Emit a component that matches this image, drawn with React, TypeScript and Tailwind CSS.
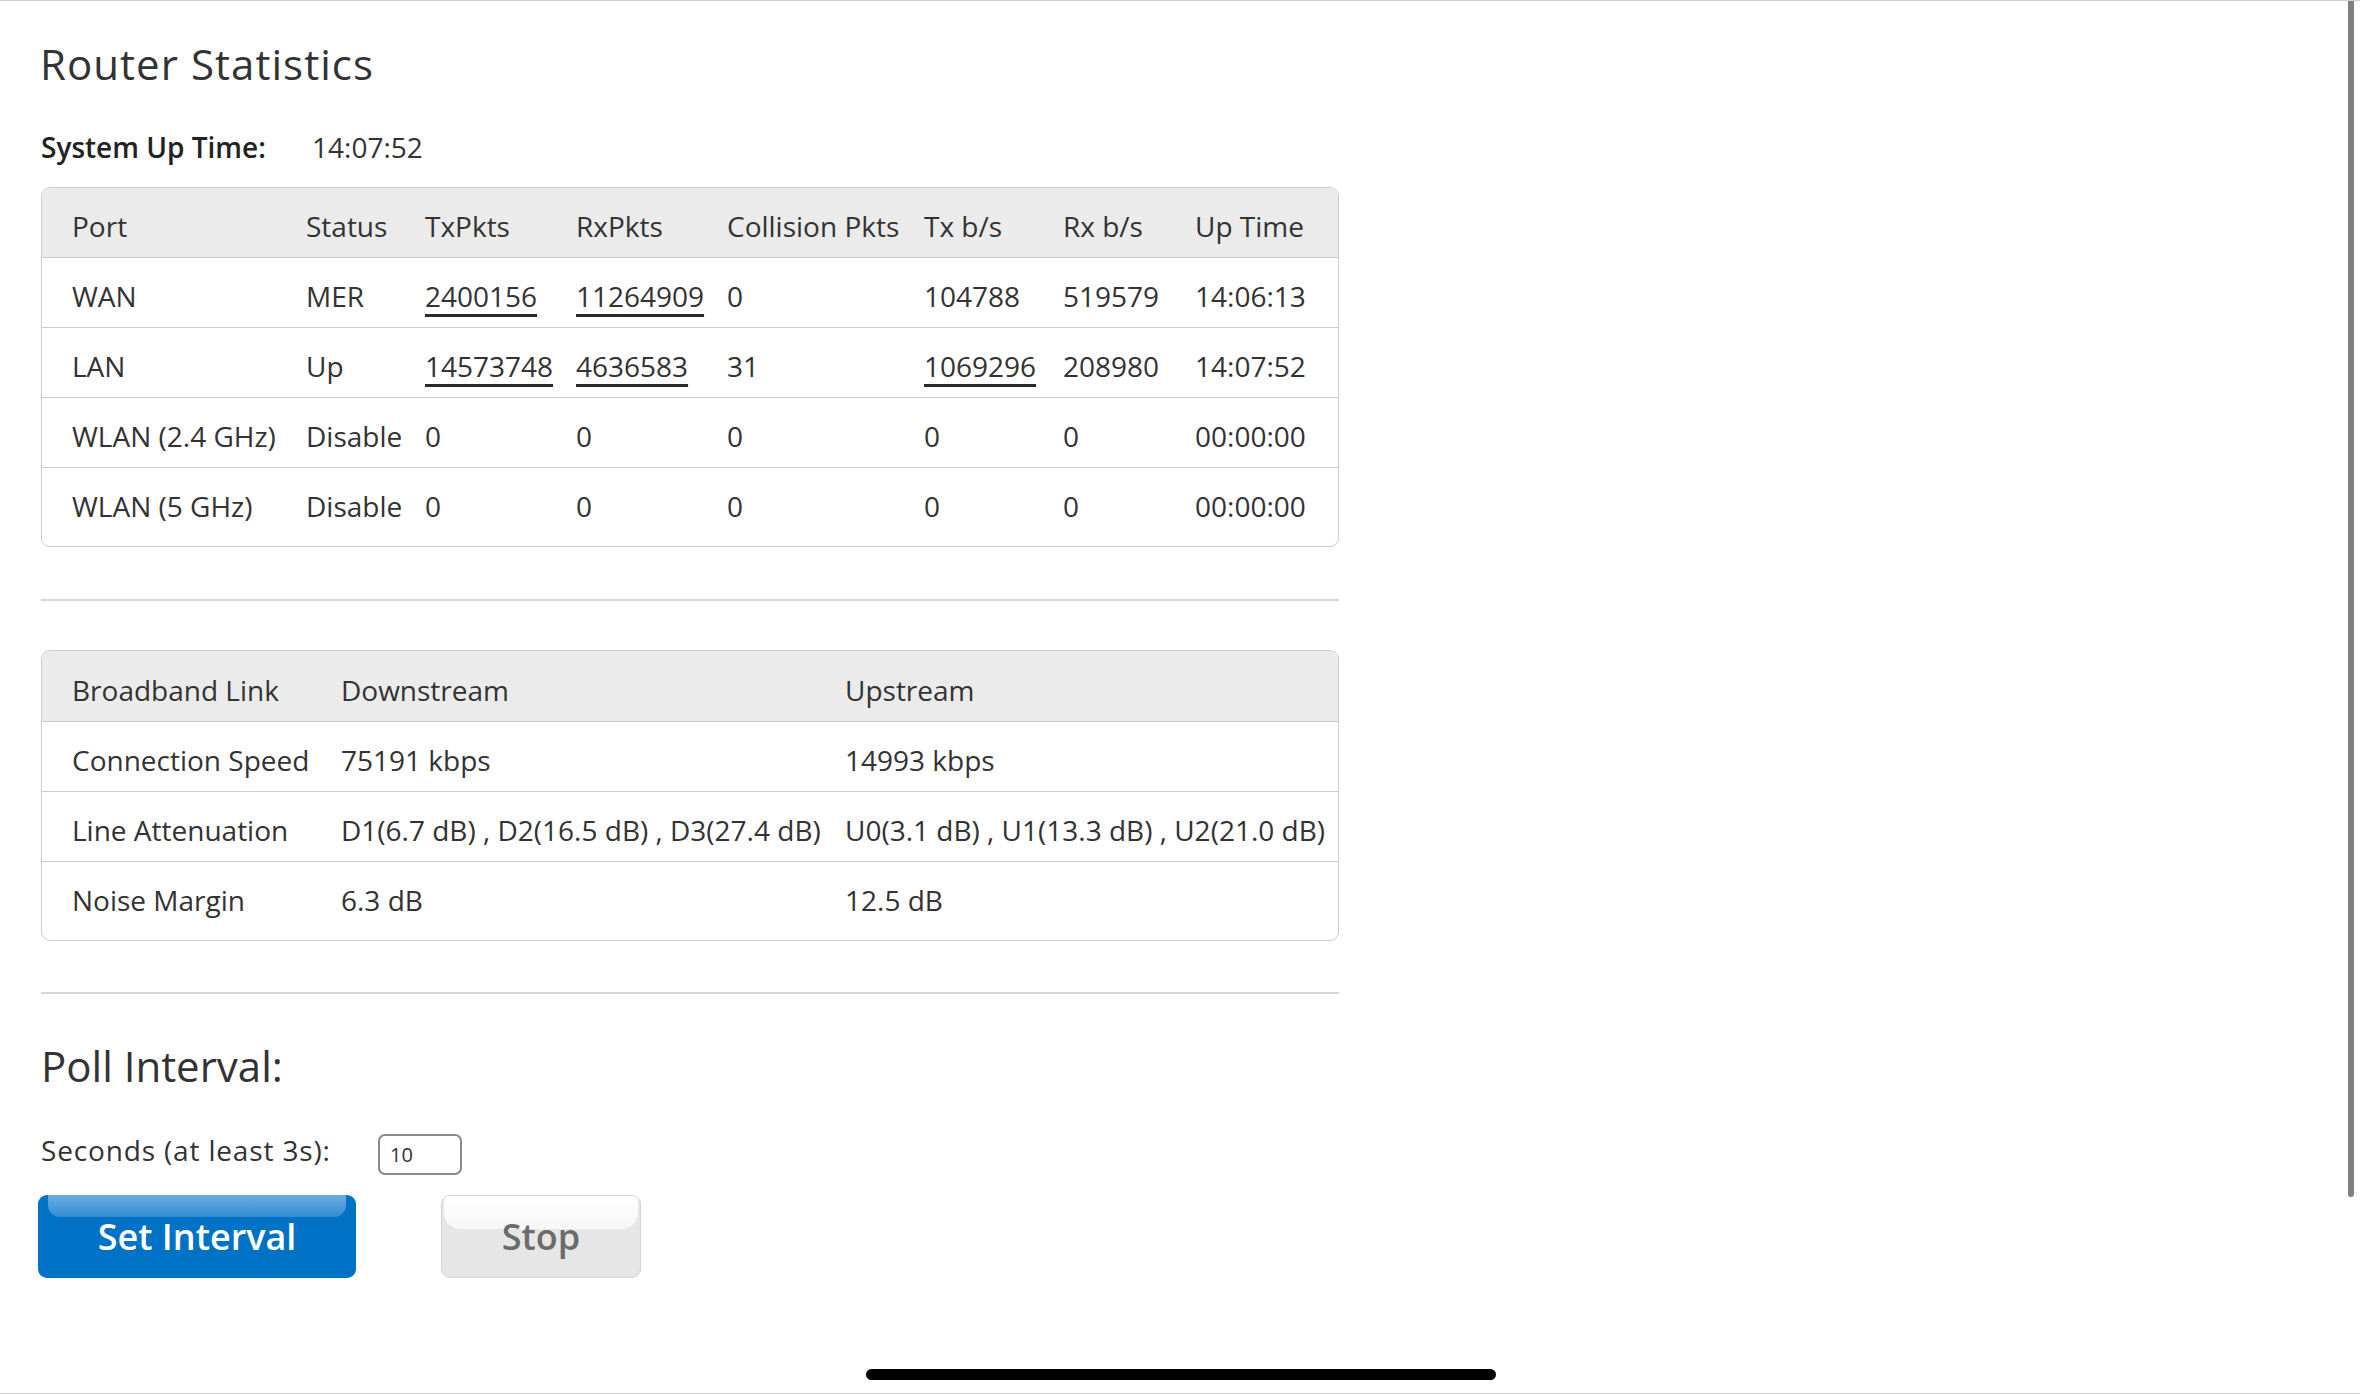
import React from "react";

const font = { fontFamily: '"Open Sans", "Liberation Sans", sans-serif' };

type Cell = string | { link: string };

const portRows: Cell[][] = [
  ["WAN", "MER", { link: "2400156" }, { link: "11264909" }, "0", "104788", "519579", "14:06:13"],
  ["LAN", "Up", { link: "14573748" }, { link: "4636583" }, "31", { link: "1069296" }, "208980", "14:07:52"],
  ["WLAN (2.4 GHz)", "Disable", "0", "0", "0", "0", "0", "00:00:00"],
  ["WLAN (5 GHz)", "Disable", "0", "0", "0", "0", "0", "00:00:00"],
];

const linkRows: string[][] = [
  ["Connection Speed", "75191 kbps", "14993 kbps"],
  ["Line Attenuation", "D1(6.7 dB) , D2(16.5 dB) , D3(27.4 dB)", "U0(3.1 dB) , U1(13.3 dB) , U2(21.0 dB)"],
  ["Noise Margin", "6.3 dB", "12.5 dB"],
];

function CellText({ c }: { c: Cell }) {
  if (typeof c === "string") return <span className="whitespace-nowrap">{c}</span>;
  return (
    <span className="whitespace-nowrap underline decoration-[3px] underline-offset-[7px] decoration-[#2a2a2a]">
      {c.link}
    </span>
  );
}

export default function App() {
  return (
    <div
      className="relative w-[2360px] h-[1394px] overflow-hidden bg-white border-t border-b border-[#cfcfcf] text-[#333]"
      style={font}
    >
      <div className="w-[1340px] pl-[41px] pt-[38px]">
        <h1 className="text-[42px] leading-[50px] font-normal text-[#333] -ml-[1px] tracking-[0.025em]">Router Statistics</h1>

        <div className="mt-[41px] flex text-[28px] leading-[34px]">
          <div className="w-[271px] font-semibold text-[#222]">System Up Time:</div>
          <div>14:07:52</div>
        </div>

        {/* Port table */}
        <div className="mt-[23px] w-[1298px] rounded-[9px] border border-[#cccccc] overflow-hidden pb-[9px] text-[28px] leading-[34px]">
          <div className="grid grid-cols-[234px_119px_151px_151px_197px_139px_132px_1fr] h-[69px] pt-[21px] pl-[30px] bg-[#ebebeb]">
            {["Port", "Status", "TxPkts", "RxPkts", "Collision Pkts", "Tx b/s", "Rx b/s", "Up Time"].map((h) => (
              <div key={h} className="whitespace-nowrap">{h}</div>
            ))}
          </div>
          {portRows.map((r, i) => (
            <div
              key={i}
              className="grid grid-cols-[234px_119px_151px_151px_197px_139px_132px_1fr] h-[70px] pt-[21px] pl-[30px] border-t border-[#cccccc]"
            >
              {r.map((c, j) => (
                <div key={j}>
                  <CellText c={c} />
                </div>
              ))}
            </div>
          ))}
        </div>

        <div className="mt-[52px] h-[2px] w-[1298px] bg-[#d6d6d6]" />

        {/* Broadband table */}
        <div className="mt-[49px] w-[1298px] rounded-[9px] border border-[#cccccc] overflow-hidden pb-[9px] text-[28px] leading-[34px]">
          <div className="grid grid-cols-[269px_504px_1fr] h-[70px] pt-[22px] pl-[30px] bg-[#ebebeb]">
            <div>Broadband Link</div>
            <div>Downstream</div>
            <div>Upstream</div>
          </div>
          {linkRows.map((r, i) => (
            <div key={i} className="grid grid-cols-[269px_504px_1fr] h-[70px] pt-[21px] pl-[30px] border-t border-[#cccccc]">
              {r.map((c, j) => (
                <div key={j} className="whitespace-nowrap">{c}</div>
              ))}
            </div>
          ))}
        </div>

        <div className="mt-[51px] h-[2px] w-[1298px] bg-[#d6d6d6]" />

        <h2 className="mt-[47px] text-[42px] leading-[50px] font-normal">Poll Interval:</h2>

        <div className="mt-[42px] flex items-start text-[28px] leading-[34px]">
          <label className="w-[337px] whitespace-nowrap tracking-[0.03em]">Seconds (at least 3s):</label>
          <div className="mt-[1px] w-[84px] h-[41px] rounded-[7px] border-2 border-[#8a8a8a] bg-white flex items-center pl-[10px] text-[20px] leading-none text-[#333]">
            10
          </div>
        </div>

        <div className="mt-[20px] -ml-[3px] flex gap-[85px]">
          <button className="relative w-[318px] h-[83px] rounded-[9px] bg-[#0072c6] text-white text-[36px] font-semibold flex items-center justify-center overflow-hidden">
            <span className="absolute left-[10px] right-[10px] top-0 h-[22px] rounded-b-[12px] bg-gradient-to-b from-[#6aaee3] to-[#2f8ad3]" />
            <span className="relative">Set Interval</span>
          </button>
          <button className="relative w-[200px] h-[83px] rounded-[9px] bg-[#e6e6e6] border border-[#d4d4d4] text-[#6b6b6b] text-[36px] font-semibold flex items-center justify-center overflow-hidden">
            <span className="absolute left-[2px] right-[2px] top-0 h-[33px] rounded-b-[16px] bg-gradient-to-b from-[#ffffff] to-[#f7f7f7]" />
            <span className="relative">Stop</span>
          </button>
        </div>
      </div>

      {/* scrollbar */}
      <div className="absolute top-0 left-[2348px] w-[6px] h-[1196px] rounded-b-full bg-[#808080]" />
      {/* home indicator */}
      <div className="absolute left-[866px] top-[1368px] w-[630px] h-[11px] rounded-full bg-black" />
    </div>
  );
}
